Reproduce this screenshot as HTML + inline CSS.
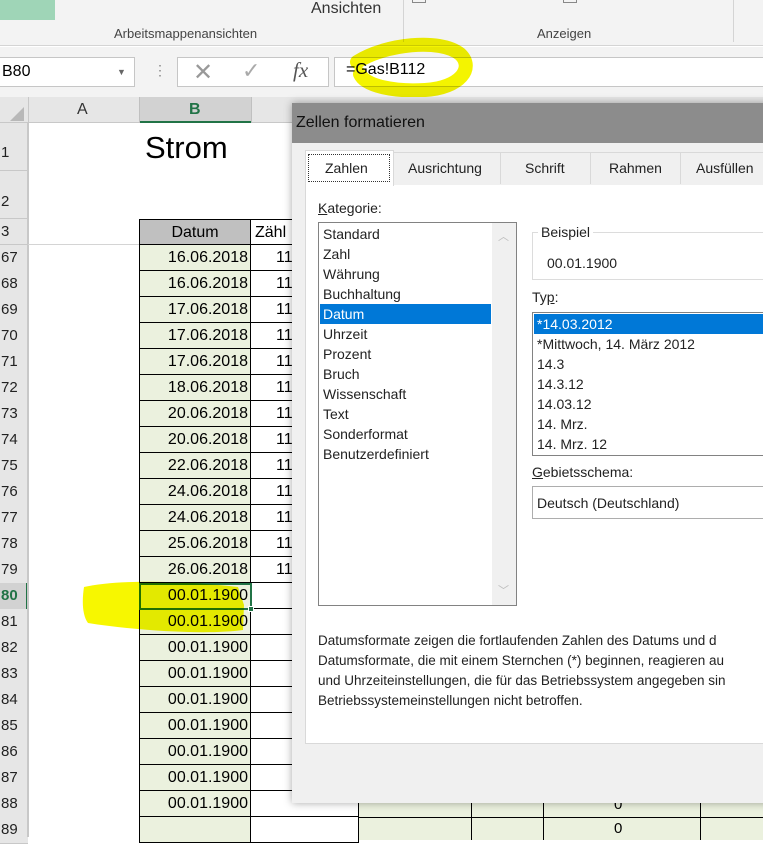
<!DOCTYPE html>
<html><head><meta charset="utf-8"><style>
*{margin:0;padding:0;box-sizing:border-box}
body{width:763px;height:837px;overflow:hidden;background:#fff;font-family:"Liberation Sans",sans-serif;position:relative}
.a{position:absolute}
.cell{position:absolute;font-size:16px;color:#000;text-align:center;line-height:26px}
.rh{position:absolute;left:0;width:28px;background:#e6e6e6;border-bottom:1px solid #c8c8c8;font-size:15px;line-height:26px;color:#222;padding-left:1px;overflow:hidden}
.dl{font-size:14px;color:#222;line-height:20px}
.hl{mix-blend-mode:multiply}
</style></head><body>
<!-- ribbon -->
<div class="a" style="left:0;top:0;width:763px;height:46px;background:#f3f3f3;border-bottom:1px solid #d4d4d4"></div>
<div class="a" style="left:0;top:0;width:55px;height:20px;background:#9fd5b7"></div>
<div class="a" style="left:311px;top:0;font-size:16px;color:#333">Ansichten</div>
<div class="a" style="left:114px;top:26px;font-size:13px;color:#444">Arbeitsmappenansichten</div>
<div class="a" style="left:537px;top:26px;font-size:13px;color:#444">Anzeigen</div>
<div class="a" style="left:403px;top:0;width:1px;height:42px;background:#d4d4d4"></div>
<div class="a" style="left:733px;top:0;width:1px;height:42px;background:#d4d4d4"></div>
<div class="a" style="left:412px;top:0;width:14px;height:3px;border:1px solid #888;border-top:none"></div>
<div class="a" style="left:563px;top:0;width:14px;height:3px;border:1px solid #888;border-top:none"></div>
<!-- formula bar -->
<div class="a" style="left:0;top:47px;width:763px;height:50px;background:#f3f3f3"></div>
<div class="a" style="left:0;top:57px;width:135px;height:30px;background:#fff;border:1px solid #c6c6c6;border-left:none;font-size:16px;line-height:28px;padding-left:2px">B80<span style="position:absolute;left:117px;font-size:9px;color:#666">▼</span></div>
<div class="a" style="left:153px;top:62px;font-size:14px;color:#888">⋮</div>
<div class="a" style="left:177px;top:57px;width:152px;height:30px;background:#fff;border:1px solid #c6c6c6"></div>
<div class="a" style="left:193px;top:58px;font-size:24px;color:#999">✕</div>
<div class="a" style="left:242px;top:58px;font-size:22px;color:#aaa">✓</div>
<div class="a" style="left:293px;top:58px;font-size:21px;color:#555;font-family:'Liberation Serif',serif;font-style:italic">fx</div>
<div class="a" style="left:334px;top:57px;width:440px;height:30px;background:#fff;border:1px solid #c6c6c6"></div>
<div class="a" style="left:346px;top:61px;font-size:16px;color:#000">=Gas!B112</div>
<svg class="a hl" style="left:335px;top:28px" width="150" height="90"><path d="M22 34 C50 16,105 10,125 26 C140 40,125 60,90 62 C60 64,30 58,25 46" fill="none" stroke="#f4f400" stroke-width="14" stroke-linecap="round"/></svg>
<!-- column headers -->
<div class="a" style="left:0;top:97px;width:763px;height:26px;background:#e6e6e6;border-bottom:1px solid #c8c8c8"></div>
<div class="a" style="left:28px;top:97px;width:1px;height:740px;background:#c8c8c8"></div>
<div class="a" style="left:0;top:97px;width:28px;height:26px;"><svg width="28" height="26"><path d="M10 24 L24 24 L24 10 Z" fill="#b8b8b8"/></svg></div>
<div class="a" style="left:139px;top:97px;width:112px;height:26px;background:#d2d2d2;border-bottom:2px solid #217346"></div>
<div class="a" style="left:139px;top:97px;width:1px;height:26px;background:#c0c0c0"></div>
<div class="a" style="left:251px;top:97px;width:1px;height:26px;background:#c0c0c0"></div>
<div class="a" style="left:77px;top:101px;font-size:16px;color:#333">A</div>
<div class="a" style="left:189px;top:101px;font-size:16px;color:#217346;font-weight:bold">B</div>
<!-- row headers -->
<div class="rh" style="top:123px;height:48px;line-height:60px">1</div>
<div class="rh" style="top:171px;height:48px;line-height:62px">2</div>
<div class="rh" style="top:219px;height:26px">3</div>
<div class="rh" style="top:245px">67</div><div class="rh" style="top:271px">68</div><div class="rh" style="top:297px">69</div>
<div class="rh" style="top:323px">70</div><div class="rh" style="top:349px">71</div><div class="rh" style="top:375px">72</div>
<div class="rh" style="top:401px">73</div><div class="rh" style="top:427px">74</div><div class="rh" style="top:453px">75</div>
<div class="rh" style="top:479px">76</div><div class="rh" style="top:505px">77</div><div class="rh" style="top:531px">78</div>
<div class="rh" style="top:557px">79</div>
<div class="rh" style="top:583px;background:#d2d2d2;color:#217346;font-weight:bold;border-right:2px solid #217346">80</div>
<div class="rh" style="top:609px">81</div><div class="rh" style="top:635px">82</div><div class="rh" style="top:661px">83</div>
<div class="rh" style="top:687px">84</div><div class="rh" style="top:713px">85</div><div class="rh" style="top:739px">86</div>
<div class="rh" style="top:765px">87</div><div class="rh" style="top:791px">88</div><div class="rh" style="top:817px">89</div>
<div class="a" style="left:0;top:123px;width:28px;height:714px;border-right:1px solid #c8c8c8"></div>
<!-- sheet content -->
<div class="a" style="left:145px;top:130px;font-size:31px">Strom</div>
<div class="a" style="left:28px;top:244px;width:111px;height:1px;background:#d4d4d4"></div>
<div class="a" style="left:139px;top:219px;width:112px;height:26px;background:#c0c0c0;border:1px solid #000;font-size:16px;text-align:center;line-height:26px">Datum</div>
<div class="a" style="left:251px;top:219px;width:60px;height:26px;border:1px solid #000;border-left:none;font-size:16px;line-height:26px;padding-left:4px">Zähl</div>
<div class="a" style="left:139px;top:245px;width:112px;height:598px;background:#ebf1de;border-left:1px solid #000;border-right:1px solid #000"></div>
<div class="a" style="left:251px;top:245px;width:108px;height:598px;border-right:1px solid #000"></div>
<div class="a" style="left:359px;top:740px;width:404px;height:100px;background:#ebf1de"></div>
<div class="a" style="left:471px;top:740px;width:1px;height:100px;background:#000"></div>
<div class="a" style="left:543px;top:740px;width:1px;height:100px;background:#000"></div>
<div class="a" style="left:700px;top:740px;width:1px;height:100px;background:#000"></div>
<div class="a" style="left:359px;top:817px;width:404px;height:1px;background:#000"></div>
<div class="a" style="left:614px;top:796px;font-size:15px">0</div>
<div class="a" style="left:614px;top:820px;font-size:15px">0</div>
<div id="rows"></div>
<script>
var d=["16.06.2018","16.06.2018","17.06.2018","17.06.2018","17.06.2018","18.06.2018","20.06.2018","20.06.2018","22.06.2018","24.06.2018","24.06.2018","25.06.2018","26.06.2018"];
var h="";
for(var i=0;i<23;i++){var t=245+i*26;
h+='<div class="a" style="left:139px;top:'+(t+25)+'px;width:220px;height:1px;background:#000"></div>';
var v=i<13?d[i]:(i<22?"00.01.1900":"");
h+='<div class="cell" style="left:139px;top:'+t+'px;width:112px;text-align:right;padding-right:3px">'+v+'</div>';
if(i<13)h+='<div class="cell" style="left:276px;top:'+t+'px">11</div>';}
document.getElementById("rows").innerHTML=h;
</script>
<div class="a" style="left:139px;top:583px;width:113px;height:27px;border:2px solid #217346"></div>
<div class="a" style="left:248px;top:606px;width:6px;height:6px;background:#217346;border:1px solid #fff"></div>
<svg class="a hl" style="left:78px;top:575px" width="180" height="65"><path d="M6 12 C40 4,110 6,160 12 L166 30 L165 55 C130 60,60 56,10 48 C4 40,4 25,6 12 Z" fill="#f7f700"/></svg>
<!-- dialog -->
<div class="a" style="left:292px;top:103px;width:480px;height:700px;background:#f0f0f0;box-shadow:0 0 8px rgba(0,0,0,.35)"></div>
<div class="a" style="left:292px;top:103px;width:480px;height:40px;background:#8c8c8c"></div>
<div class="a" style="left:296px;top:114px;font-size:16px;color:#111">Zellen formatieren</div>
<div class="a" style="left:305px;top:184px;width:470px;height:560px;background:#fff;border:1px solid #d9d9d9"></div>
<div class="a" style="left:393px;top:152px;width:400px;height:33px;background:#f0f0f0;border:1px solid #d9d9d9;border-bottom:none"></div>
<div class="a" style="left:500px;top:152px;width:1px;height:32px;background:#d9d9d9"></div>
<div class="a" style="left:590px;top:152px;width:1px;height:32px;background:#d9d9d9"></div>
<div class="a" style="left:680px;top:152px;width:1px;height:32px;background:#d9d9d9"></div>
<div class="a" style="left:305px;top:150px;width:89px;height:36px;background:#fff;border:1px solid #d9d9d9;border-bottom:none"></div>
<div class="a" style="left:308px;top:154px;width:82px;height:28px;border:1px dotted #333"></div>
<div class="a dl" style="left:325px;top:158px">Zahlen</div>
<div class="a dl" style="left:408px;top:158px">Ausrichtung</div>
<div class="a dl" style="left:525px;top:158px">Schrift</div>
<div class="a dl" style="left:609px;top:158px">Rahmen</div>
<div class="a dl" style="left:696px;top:158px">Ausfüllen</div>
<div class="a dl" style="left:318px;top:198px"><u>K</u>ategorie:</div>
<div class="a" style="left:318px;top:222px;width:199px;height:384px;background:#fff;border:1px solid #828282"></div>
<div class="a" style="left:492px;top:223px;width:24px;height:382px;background:#f0f0f0"></div>
<div class="a" style="left:498px;top:228px;font-size:11px;color:#bbb">︿</div>
<div class="a" style="left:498px;top:582px;font-size:11px;color:#bbb">﹀</div>
<div class="a" style="left:320px;top:304px;width:171px;height:20px;background:#0078d7"></div>
<div class="a dl" style="left:323px;top:224px">Standard<br>Zahl<br>Währung<br>Buchhaltung<br><span style="color:#fff">Datum</span><br>Uhrzeit<br>Prozent<br>Bruch<br>Wissenschaft<br>Text<br>Sonderformat<br>Benutzerdefiniert</div>
<div class="a" style="left:532px;top:232px;width:240px;height:48px;border:1px solid #dcdcdc;border-right:none"></div>
<div class="a dl" style="left:538px;top:222px;background:#fff;padding:0 3px">Beispiel</div>
<div class="a dl" style="left:547px;top:253px">00.01.1900</div>
<div class="a dl" style="left:532px;top:287px">Ty<u>p</u>:</div>
<div class="a" style="left:532px;top:312px;width:240px;height:144px;border:1px solid #828282;background:#fff"></div>
<div class="a" style="left:534px;top:314px;width:240px;height:20px;background:#0078d7"></div>
<div class="a dl" style="left:537px;top:314px"><span style="color:#fff">*14.03.2012</span><br>*Mittwoch, 14. März 2012<br>14.3<br>14.3.12<br>14.03.12<br>14. Mrz.<br>14. Mrz. 12</div>
<div class="a dl" style="left:532px;top:462px"><u>G</u>ebietsschema:</div>
<div class="a" style="left:532px;top:486px;width:240px;height:33px;border:1px solid #adadad;background:#fff"></div>
<div class="a dl" style="left:537px;top:493px">Deutsch (Deutschland)</div>
<div class="a" style="left:318px;top:631px;font-size:13.5px;line-height:20px;color:#222;white-space:nowrap">Datumsformate zeigen die fortlaufenden Zahlen des Datums und d<br>Datumsformate, die mit einem Sternchen (*) beginnen, reagieren au<br>und Uhrzeiteinstellungen, die für das Betriebssystem angegeben sin<br>Betriebssystemeinstellungen nicht betroffen.</div>
</body></html>
